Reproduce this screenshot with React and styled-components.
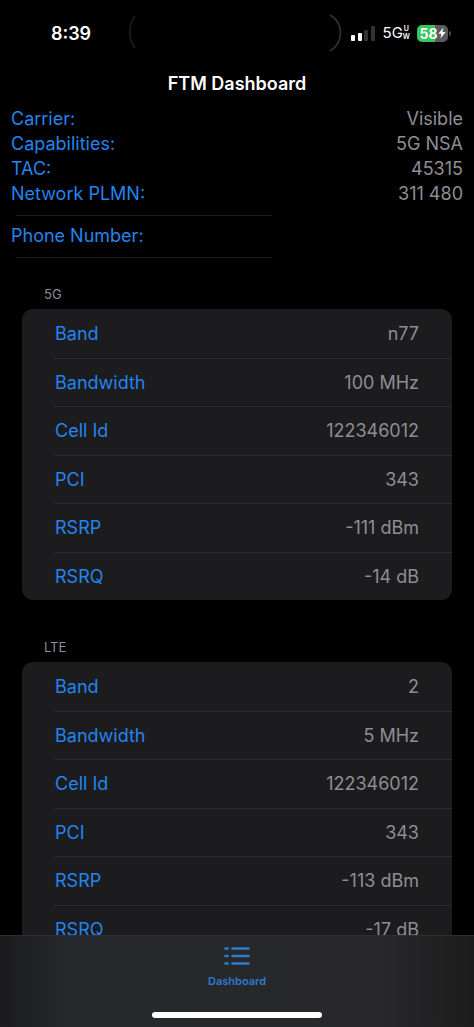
import React from "react";
import styled, { createGlobalStyle } from "styled-components";

const summary = [
  { label: "Carrier:", value: "Visible" },
  { label: "Capabilities:", value: "5G NSA" },
  { label: "TAC:", value: "45315" },
  { label: "Network PLMN:", value: "311 480" },
];

const sections = [
  {
    title: "5G",
    rows: [
      { label: "Band", value: "n77" },
      { label: "Bandwidth", value: "100 MHz" },
      { label: "Cell Id", value: "122346012" },
      { label: "PCI", value: "343" },
      { label: "RSRP", value: "-111 dBm" },
      { label: "RSRQ", value: "-14 dB" },
    ],
  },
  {
    title: "LTE",
    rows: [
      { label: "Band", value: "2" },
      { label: "Bandwidth", value: "5 MHz" },
      { label: "Cell Id", value: "122346012" },
      { label: "PCI", value: "343" },
      { label: "RSRP", value: "-113 dBm" },
      { label: "RSRQ", value: "-17 dB" },
    ],
  },
];

const StatusBar = () => {
  return (
    <Status>
      <Time>8:39</Time>
      <Island viewBox="0 0 214 40" aria-hidden="true">
        <path d="M5 3 C-2 12 -2 26 5 35" stroke="#1d1d1d" />
        <path d="M200 2 C214 10 214 29 200 38" stroke="#323232" />
      </Island>
      <Indicators>
        <Signal viewBox="0 0 25 16" aria-label="Signal, 2 of 4 bars">
          <rect x="0" y="10" width="4" height="6" rx="1" fill="#fff" />
          <rect x="7" y="8" width="4" height="8" rx="1" fill="#fff" />
          <rect x="13" y="5" width="4" height="11" rx="1" fill="#333" />
          <rect x="20" y="1" width="4" height="15" rx="1" fill="#333" />
        </Signal>
        <Network>
          5G
          <Stack>
            <span>U</span>
            <span>W</span>
          </Stack>
        </Network>
        <Battery>
          <Charge>
            58
            <svg width="8" height="12" viewBox="0 0 8 12" aria-hidden="true">
              <path d="M5.4 0.4 L0.3 6.8 H3.4 L2.4 11.6 L7.7 5 H4.5 Z" fill="#fff" />
            </svg>
          </Charge>
          <Nub />
        </Battery>
      </Indicators>
    </Status>
  );
};

const App = () => {
  return (
    <>
      <GlobalStyle />
      <Screen>
        <StatusBar />
        <Title>FTM Dashboard</Title>
        <Main>
          <Summary>
            {summary.map((item) => (
              <SummaryRow key={item.label}>
                <Label>{item.label}</Label>
                <Value>{item.value}</Value>
              </SummaryRow>
            ))}
          </Summary>
          <Divider />
          <Summary>
            <SummaryRow>
              <Label>Phone Number:</Label>
              <Value />
            </SummaryRow>
          </Summary>
          <Divider />
          {sections.map((section) => (
            <Section key={section.title}>
              <SectionTitle>{section.title}</SectionTitle>
              <Card>
                {section.rows.map((row) => (
                  <CardRow key={row.label}>
                    <Label>{row.label}</Label>
                    <Value>{row.value}</Value>
                  </CardRow>
                ))}
              </Card>
            </Section>
          ))}
        </Main>
        <TabBar>
          <Tab type="button" aria-current="page">
            <svg width="26" height="18" viewBox="0 0 26 18" aria-hidden="true">
              <g stroke="currentColor" strokeWidth="2.4" strokeLinecap="round">
                <path d="M1.4 1.5 H3.8 M8.4 1.5 H24.6" />
                <path d="M1.4 9 H3.8 M8.4 9 H24.6" />
                <path d="M1.4 16.5 H3.8 M8.4 16.5 H24.6" />
              </g>
            </svg>
            Dashboard
          </Tab>
          <HomeIndicator />
        </TabBar>
      </Screen>
    </>
  );
};

const GlobalStyle = createGlobalStyle`
  * {
    box-sizing: border-box;
    margin: 0;
    padding: 0;
  }
  body {
    background: #000;
    color: #fff;
    font-family: Inter, "Liberation Sans", sans-serif;
  }
`;

const Screen = styled.div`
  height: 100vh;
  display: flex;
  flex-direction: column;
  overflow: hidden;
`;

const Status = styled.header`
  flex: none;
  height: 66px;
  display: grid;
  grid-template-columns: 1fr 214px 1fr;
  align-items: center;
`;

const Time = styled.div`
  padding-left: 12px;
  font-size: 18px;
  font-weight: 600;
  text-align: center;
`;

const Island = styled.svg`
  width: 100%;
  height: 40px;
  overflow: visible;
  path {
    fill: none;
    stroke-width: 1.6;
  }
`;

const Indicators = styled.div`
  display: flex;
  align-items: center;
  justify-content: flex-end;
  gap: 7px;
  padding-right: 23px;
`;

const Signal = styled.svg`
  width: 25px;
  height: 16px;
  flex: none;
`;

const Network = styled.div`
  display: flex;
  align-items: center;
  font-size: 15px;
  line-height: 16px;
`;

const Stack = styled.span`
  display: flex;
  flex-direction: column;
  align-items: center;
  font-size: 7px;
  font-weight: 600;
  line-height: 8px;
`;

const Battery = styled.div`
  display: flex;
  align-items: center;
  gap: 1px;
`;

const Charge = styled.div`
  width: 31px;
  height: 17px;
  display: flex;
  align-items: center;
  justify-content: center;
  border-radius: 5px;
  background: linear-gradient(to right, #34c759 58%, #5a5a5c 58%);
  font-size: 14px;
  font-weight: 700;
`;

const Nub = styled.div`
  width: 2px;
  height: 5px;
  border-radius: 0 2px 2px 0;
  background: #48484a;
`;

const Title = styled.h1`
  flex: none;
  font-size: 18px;
  font-weight: 600;
  line-height: 36px;
  text-align: center;
`;

const Main = styled.main`
  flex: 1;
  min-height: 0;
  padding-top: 4px;
  overflow-y: auto;
  scrollbar-width: none;
`;

const Summary = styled.dl`
  padding: 0 11px;
`;

const SummaryRow = styled.div`
  display: flex;
  justify-content: space-between;
  font-size: 18px;
  line-height: 25px;
`;

const Label = styled.dt`
  color: #2384ee;
`;

const Value = styled.dd`
  color: #8e8e93;
`;

const Divider = styled.hr`
  width: 54%;
  height: 1px;
  margin: 9px 0 7px 16px;
  border: 0;
  background: #1c1c1d;
`;

const Section = styled.section`
  padding: 19px 22px 18px;
`;

const SectionTitle = styled.h2`
  padding: 0 22px 5px;
  color: #8e8e93;
  font-size: 13px;
  font-weight: 400;
  line-height: 20px;
`;

const Card = styled.dl`
  min-height: 291px;
  display: grid;
  grid-auto-rows: 1fr;
  border-radius: 11px;
  background: #1c1c1e;
`;

const CardRow = styled.div`
  display: flex;
  align-items: center;
  justify-content: space-between;
  margin-left: 33px;
  padding-right: 33px;
  font-size: 18px;
  & + & {
    border-top: 1px solid #2a2a2c;
  }
`;

const TabBar = styled.nav`
  flex: none;
  height: 92px;
  display: flex;
  flex-direction: column;
  align-items: center;
  justify-content: space-between;
  padding: 11px 0 9px;
  border-top: 1px solid #2e2e30;
  background: linear-gradient(
    to right,
    #1b1b1c,
    #25282c 14%,
    #272829 30%,
    #28282a 80%,
    #1c1c1d
  );
`;

const Tab = styled.button`
  display: flex;
  flex-direction: column;
  align-items: center;
  gap: 9px;
  border: 0;
  background: none;
  color: #2a7bd0;
  font: inherit;
  font-size: 11px;
  font-weight: 600;
  line-height: 14px;
`;

const HomeIndicator = styled.div`
  width: 170px;
  height: 6px;
  border-radius: 3px;
  background: #fff;
`;

export default App;
